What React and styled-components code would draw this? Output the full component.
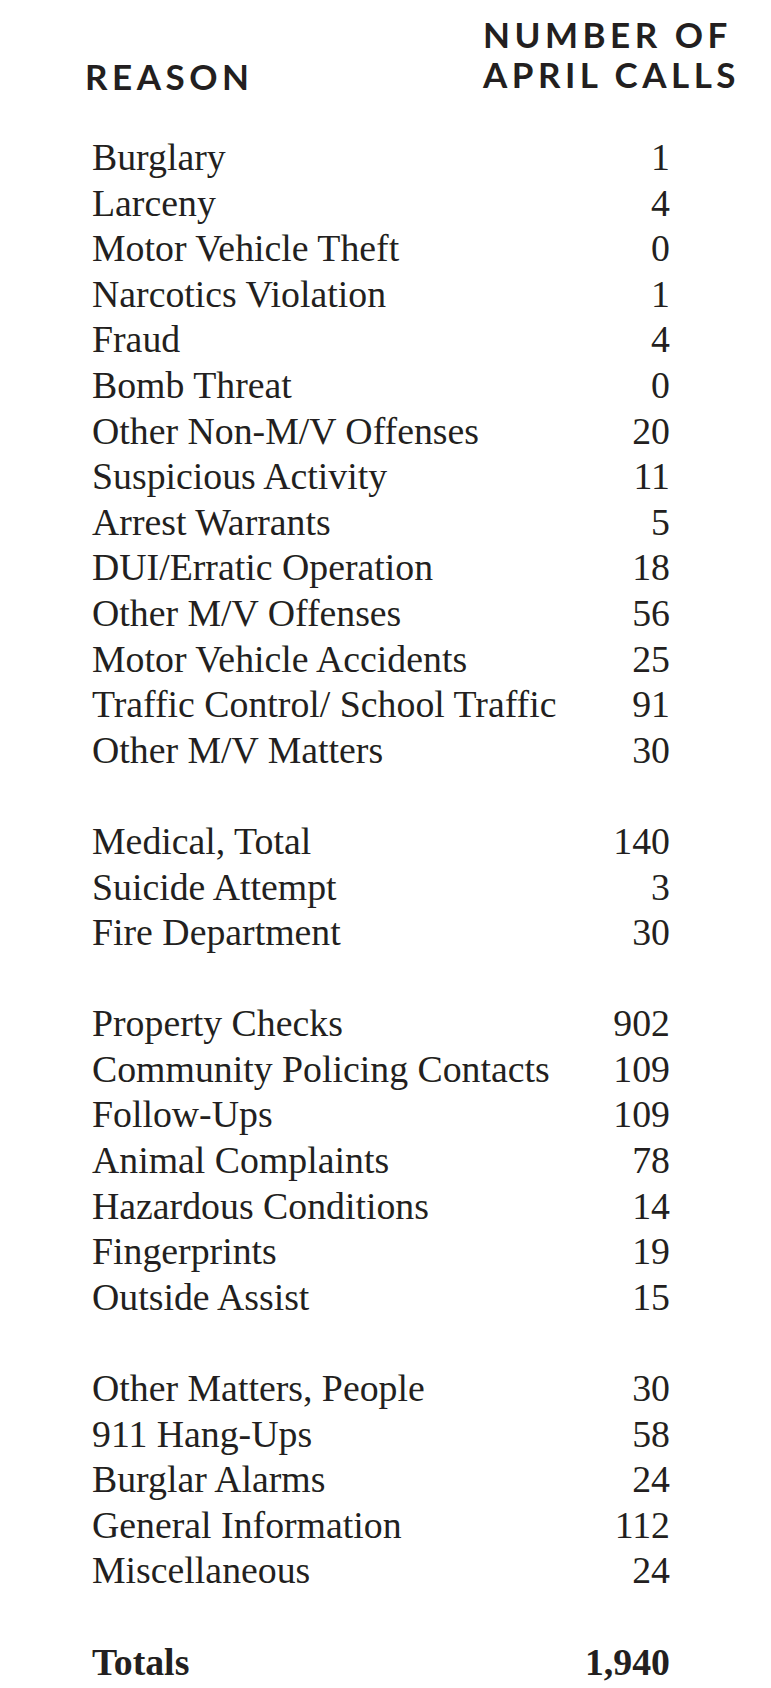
import React from "react";
import styled, { createGlobalStyle } from "styled-components";

const Global = createGlobalStyle`
  html, body { margin: 0; padding: 0; background: #ffffff; }
  body { color: #231f20; }
`;

const Page = styled.div`
  width: 771px;
  min-height: 1688px;
  box-sizing: border-box;
  padding-top: 14px;
  background: #ffffff;
`;

const Header = styled.div`
  display: grid;
  grid-template-columns: 398px auto;
  align-items: end;
  padding-left: 85px;
  font-family: Lato, "Liberation Sans", sans-serif;
  font-weight: 700;
  font-size: 35px;
  line-height: 40px;
  letter-spacing: 4.5px;
  text-transform: uppercase;
  color: #231f20;
`;

const HeadCell = styled.div`
  margin-bottom: ${(p) => (p.$low ? "-2px" : "0")};
`;

const Table = styled.div`
  display: flex;
  flex-direction: column;
  gap: 45.6px;
  margin-top: 41px;
  padding-left: 92px;
  width: 578px;
`;

const Group = styled.div`
  display: flex;
  flex-direction: column;
`;

const Row = styled.div`
  display: grid;
  grid-template-columns: 1fr auto;
  font-family: "Liberation Serif", "Times New Roman", serif;
  font-size: 37.8px;
  line-height: 45.6px;
  font-weight: ${(p) => (p.$bold ? 700 : 400)};
  color: #231f20;
  white-space: nowrap;
`;

const Label = styled.span``;
const Value = styled.span`
  text-align: right;
`;

const groups = [
  [
    ["Burglary", "1"],
    ["Larceny", "4"],
    ["Motor Vehicle Theft", "0"],
    ["Narcotics Violation", "1"],
    ["Fraud", "4"],
    ["Bomb Threat", "0"],
    ["Other Non-M/V Offenses", "20"],
    ["Suspicious Activity", "11"],
    ["Arrest Warrants", "5"],
    ["DUI/Erratic Operation", "18"],
    ["Other M/V Offenses", "56"],
    ["Motor Vehicle Accidents", "25"],
    ["Traffic Control/ School Traffic", "91"],
    ["Other M/V Matters", "30"],
  ],
  [
    ["Medical, Total", "140"],
    ["Suicide Attempt", "3"],
    ["Fire Department", "30"],
  ],
  [
    ["Property Checks", "902"],
    ["Community Policing Contacts", "109"],
    ["Follow-Ups", "109"],
    ["Animal Complaints", "78"],
    ["Hazardous Conditions", "14"],
    ["Fingerprints", "19"],
    ["Outside Assist", "15"],
  ],
  [
    ["Other Matters, People", "30"],
    ["911 Hang-Ups", "58"],
    ["Burglar Alarms", "24"],
    ["General Information", "112"],
    ["Miscellaneous", "24"],
  ],
];

export default function App() {
  return (
    <Page>
      <Global />
      <Header>
        <HeadCell $low>Reason</HeadCell>
        <HeadCell>
          Number of
          <br />
          April Calls
        </HeadCell>
      </Header>
      <Table>
        {groups.map((g, i) => (
          <Group key={i}>
            {g.map(([label, value]) => (
              <Row key={label}>
                <Label>{label}</Label>
                <Value>{value}</Value>
              </Row>
            ))}
          </Group>
        ))}
        <Group>
          <Row $bold>
            <Label>Totals</Label>
            <Value>1,940</Value>
          </Row>
        </Group>
      </Table>
    </Page>
  );
}
